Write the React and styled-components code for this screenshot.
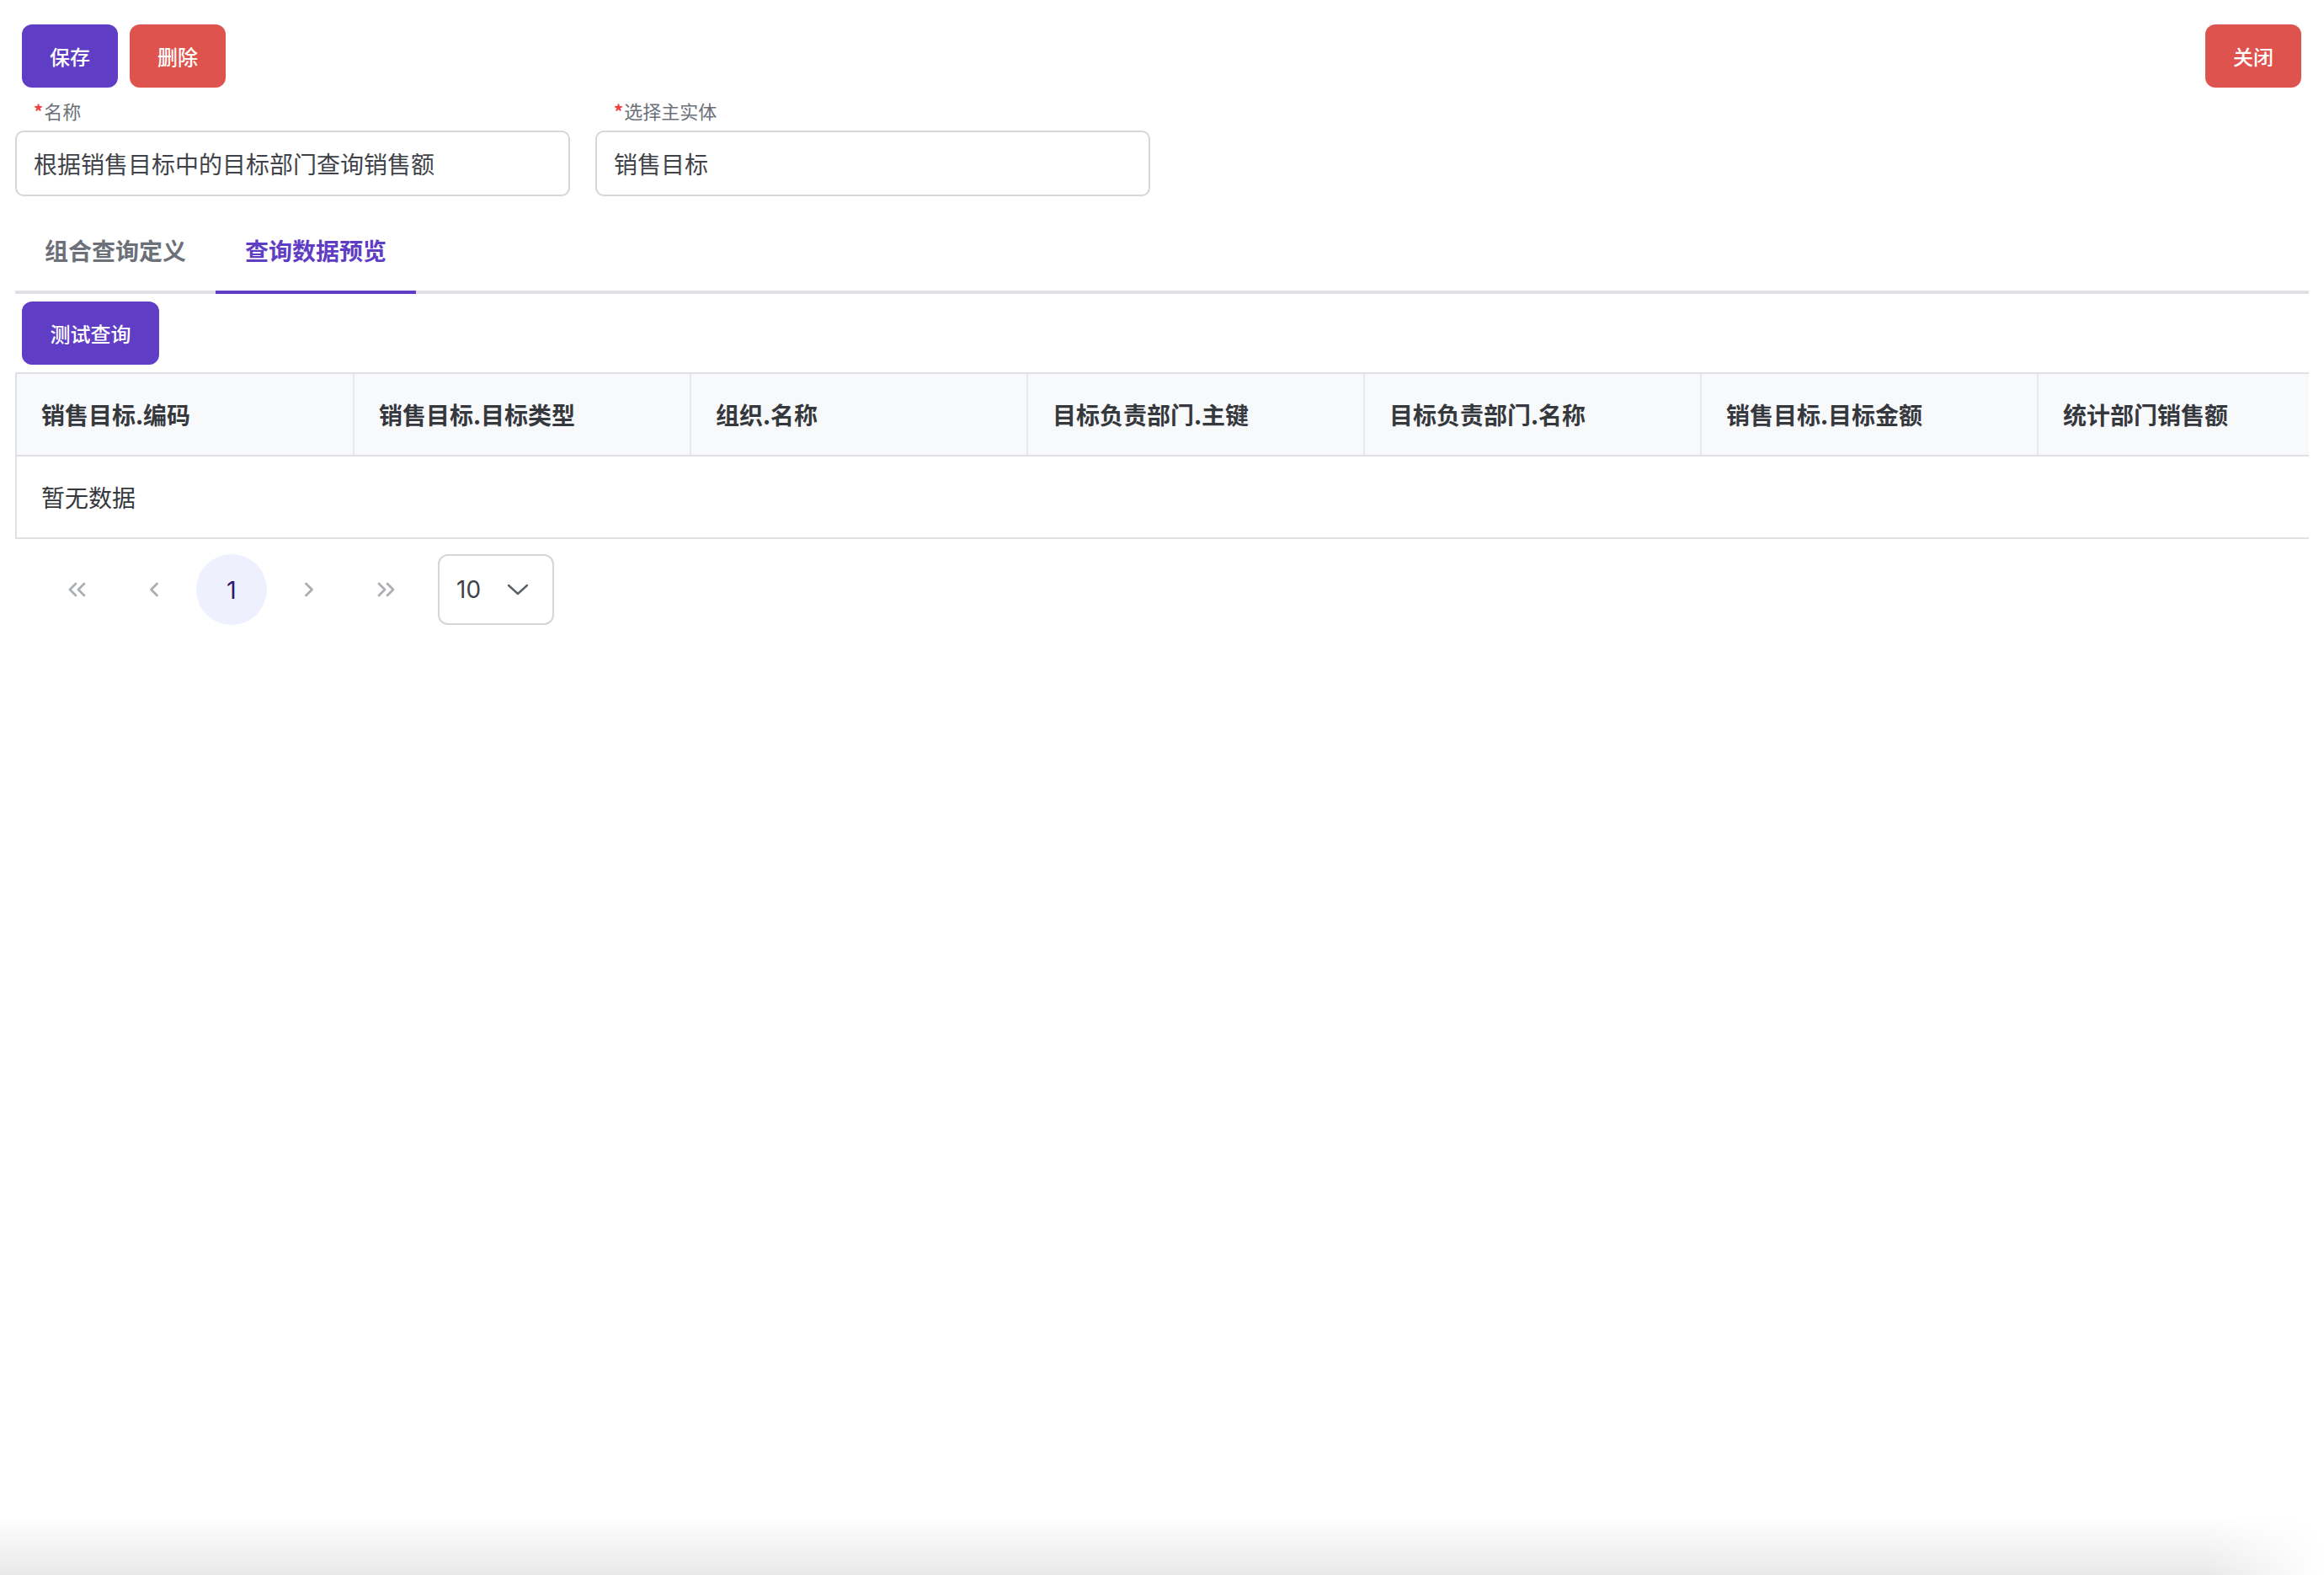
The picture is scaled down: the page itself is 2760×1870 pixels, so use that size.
import React from 'react';
import styled, { createGlobalStyle } from 'styled-components';

const GlobalStyle = createGlobalStyle`
  html, body {
    margin: 0;
    padding: 0;
    background: #ffffff;
    font-family: "Noto Sans CJK SC", "Noto Sans", Inter, sans-serif;
    color: #343a40;
  }
  * {
    box-sizing: border-box;
  }
`;

const columns = [
  '销售目标.编码',
  '销售目标.目标类型',
  '组织.名称',
  '目标负责部门.主键',
  '目标负责部门.名称',
  '销售目标.目标金额',
  '统计部门销售额',
];

const App = () => {
  return (
    <>
      <GlobalStyle />
      <Page>
        <Toolbar>
          <ButtonGroup>
            <ActionButton $tone="primary">保存</ActionButton>
            <ActionButton $tone="danger">删除</ActionButton>
          </ButtonGroup>
          <ActionButton $tone="danger">关闭</ActionButton>
        </Toolbar>

        <FormRow>
          <Field>
            <Label>
              <Required>*</Required>名称
            </Label>
            <TextInput defaultValue="根据销售目标中的目标部门查询销售额" />
          </Field>
          <Field>
            <Label>
              <Required>*</Required>选择主实体
            </Label>
            <TextInput defaultValue="销售目标" />
          </Field>
        </FormRow>

        <TabList>
          <Tab>组合查询定义</Tab>
          <Tab $active>查询数据预览</Tab>
        </TabList>

        <PanelBar>
          <ActionButton $tone="primary" $wide>
            测试查询
          </ActionButton>
        </PanelBar>

        <TableWrap>
          <Table>
            <colgroup>
              {columns.map((c) => (
                <col key={c} style={{ width: 400 }} />
              ))}
            </colgroup>
            <thead>
              <tr>
                {columns.map((c) => (
                  <Th key={c}>{c}</Th>
                ))}
              </tr>
            </thead>
            <tbody>
              <tr>
                <EmptyCell colSpan={columns.length}>暂无数据</EmptyCell>
              </tr>
            </tbody>
          </Table>
        </TableWrap>

        <Pager>
          <PageButton aria-label="first">
            <svg width="24" height="18" viewBox="0 0 24 18" fill="none" stroke="currentColor" strokeWidth="2.8" strokeLinecap="round" strokeLinejoin="round">
              <path d="M11 2 L4 9 L11 16" />
              <path d="M21 2 L14 9 L21 16" />
            </svg>
          </PageButton>
          <PageButton aria-label="prev">
            <svg width="14" height="18" viewBox="0 0 14 18" fill="none" stroke="currentColor" strokeWidth="2.8" strokeLinecap="round" strokeLinejoin="round">
              <path d="M10.5 2 L3.5 9 L10.5 16" />
            </svg>
          </PageButton>
          <PageButton $active>1</PageButton>
          <PageButton aria-label="next">
            <svg width="14" height="18" viewBox="0 0 14 18" fill="none" stroke="currentColor" strokeWidth="2.8" strokeLinecap="round" strokeLinejoin="round">
              <path d="M3.5 2 L10.5 9 L3.5 16" />
            </svg>
          </PageButton>
          <PageButton aria-label="last">
            <svg width="24" height="18" viewBox="0 0 24 18" fill="none" stroke="currentColor" strokeWidth="2.8" strokeLinecap="round" strokeLinejoin="round">
              <path d="M3 2 L10 9 L3 16" />
              <path d="M13 2 L20 9 L13 16" />
            </svg>
          </PageButton>
          <SizeSelect>
            <span>10</span>
            <svg width="26" height="16" viewBox="0 0 26 16" fill="none" stroke="currentColor" strokeWidth="2.4" strokeLinecap="round" strokeLinejoin="round">
              <path d="M2 3 L13 13 L24 3" />
            </svg>
          </SizeSelect>
        </Pager>
      </Page>
      <BottomShade />
    </>
  );
};

export default App;

const Page = styled.div`
  padding: 0 18px;
  min-height: 100vh;
`;

const Toolbar = styled.div`
  display: flex;
  justify-content: space-between;
  align-items: center;
  padding: 29px 9px 0 8px;
`;

const ButtonGroup = styled.div`
  display: flex;
  gap: 14px;
`;

const ActionButton = styled.button`
  height: 75px;
  width: ${(p) => (p.$wide ? '163px' : '114px')};
  border: none;
  border-radius: 12px;
  background: ${(p) => (p.$tone === 'danger' ? '#de534d' : '#5f3dc4')};
  color: #ffffff;
  font-family: inherit;
  font-size: 24px;
  font-weight: 500;
  cursor: pointer;
`;

const FormRow = styled.div`
  display: grid;
  grid-template-columns: 659px 659px;
  column-gap: 30px;
  margin-top: 11px;
`;

const Field = styled.div`
  display: flex;
  flex-direction: column;
`;

const Label = styled.label`
  padding-left: 22px;
  font-size: 22px;
  line-height: 32px;
  color: #6b7079;
  margin-bottom: 8px;
`;

const Required = styled.span`
  color: #f03e3e;
  font-size: 22px;
  font-weight: 700;
  margin-right: 1px;
`;

const TextInput = styled.input`
  height: 78px;
  border: 2px solid #d3d6da;
  border-radius: 10px;
  padding: 0 20px;
  font-family: inherit;
  font-size: 28px;
  color: #3f4349;
  outline: none;
`;

const TabList = styled.div`
  display: flex;
  margin-top: 16px;
  border-bottom: 4px solid #dfe1e5;
`;

const Tab = styled.div`
  height: 100px;
  padding: 0 35px;
  display: flex;
  align-items: center;
  font-size: 28px;
  font-weight: 700;
  color: ${(p) => (p.$active ? '#5f3dc4' : '#6b7079')};
  margin-bottom: -4px;
  border-bottom: 4px solid ${(p) => (p.$active ? '#5f3dc4' : 'transparent')};
  cursor: pointer;
`;

const PanelBar = styled.div`
  padding: 9px 0 0 8px;
`;

const TableWrap = styled.div`
  margin-top: 9px;
  overflow: hidden;
  border-left: 2px solid #dfe1e5;
`;

const Table = styled.table`
  table-layout: fixed;
  width: 2800px;
  border-collapse: collapse;
`;

const Th = styled.th`
  height: 98px;
  padding: 0 0 0 29px;
  text-align: left;
  background: #f8f9fa;
  font-size: 28px;
  font-weight: 700;
  color: #35383d;
  border-top: 2px solid #dfe1e5;
  border-bottom: 2px solid #dfe1e5;
  border-left: 2px solid #e6e8eb;
  &:first-child {
    border-left: none;
  }
`;

const EmptyCell = styled.td`
  height: 98px;
  padding: 0 0 0 29px;
  font-size: 28px;
  color: #35383d;
  border-bottom: 2px solid #dfe1e5;
`;

const Pager = styled.div`
  display: flex;
  align-items: center;
  gap: 8px;
  margin-top: 18px;
  padding-left: 31px;
`;

const PageButton = styled.button`
  width: 84px;
  height: 84px;
  border: none;
  border-radius: 50%;
  background: ${(p) => (p.$active ? '#eef0fd' : 'transparent')};
  color: ${(p) => (p.$active ? '#2c1a6e' : '#abaeb3')};
  font-family: "Inter", "Noto Sans", sans-serif;
  font-size: 29px;
  display: flex;
  align-items: center;
  justify-content: center;
  padding: 0;
  cursor: pointer;
`;

const SizeSelect = styled.div`
  margin-left: 11px;
  width: 138px;
  height: 84px;
  border: 2px solid #d3d6da;
  border-radius: 12px;
  display: flex;
  align-items: center;
  justify-content: space-between;
  padding: 0 28px 0 20px;
  font-family: "Inter", "Noto Sans", sans-serif;
  font-size: 28px;
  color: #3f4349;

  svg {
    color: #5c6068;
  }
`;

const BottomShade = styled.div`
  position: fixed;
  left: 0;
  right: 0;
  bottom: 0;
  height: 70px;
  pointer-events: none;
  background: linear-gradient(to bottom, rgba(0, 0, 0, 0), rgba(0, 0, 0, 0.085));
  -webkit-mask-image: linear-gradient(to left, transparent 0, #000 140px);
  mask-image: linear-gradient(to left, transparent 0, #000 140px);
`;
